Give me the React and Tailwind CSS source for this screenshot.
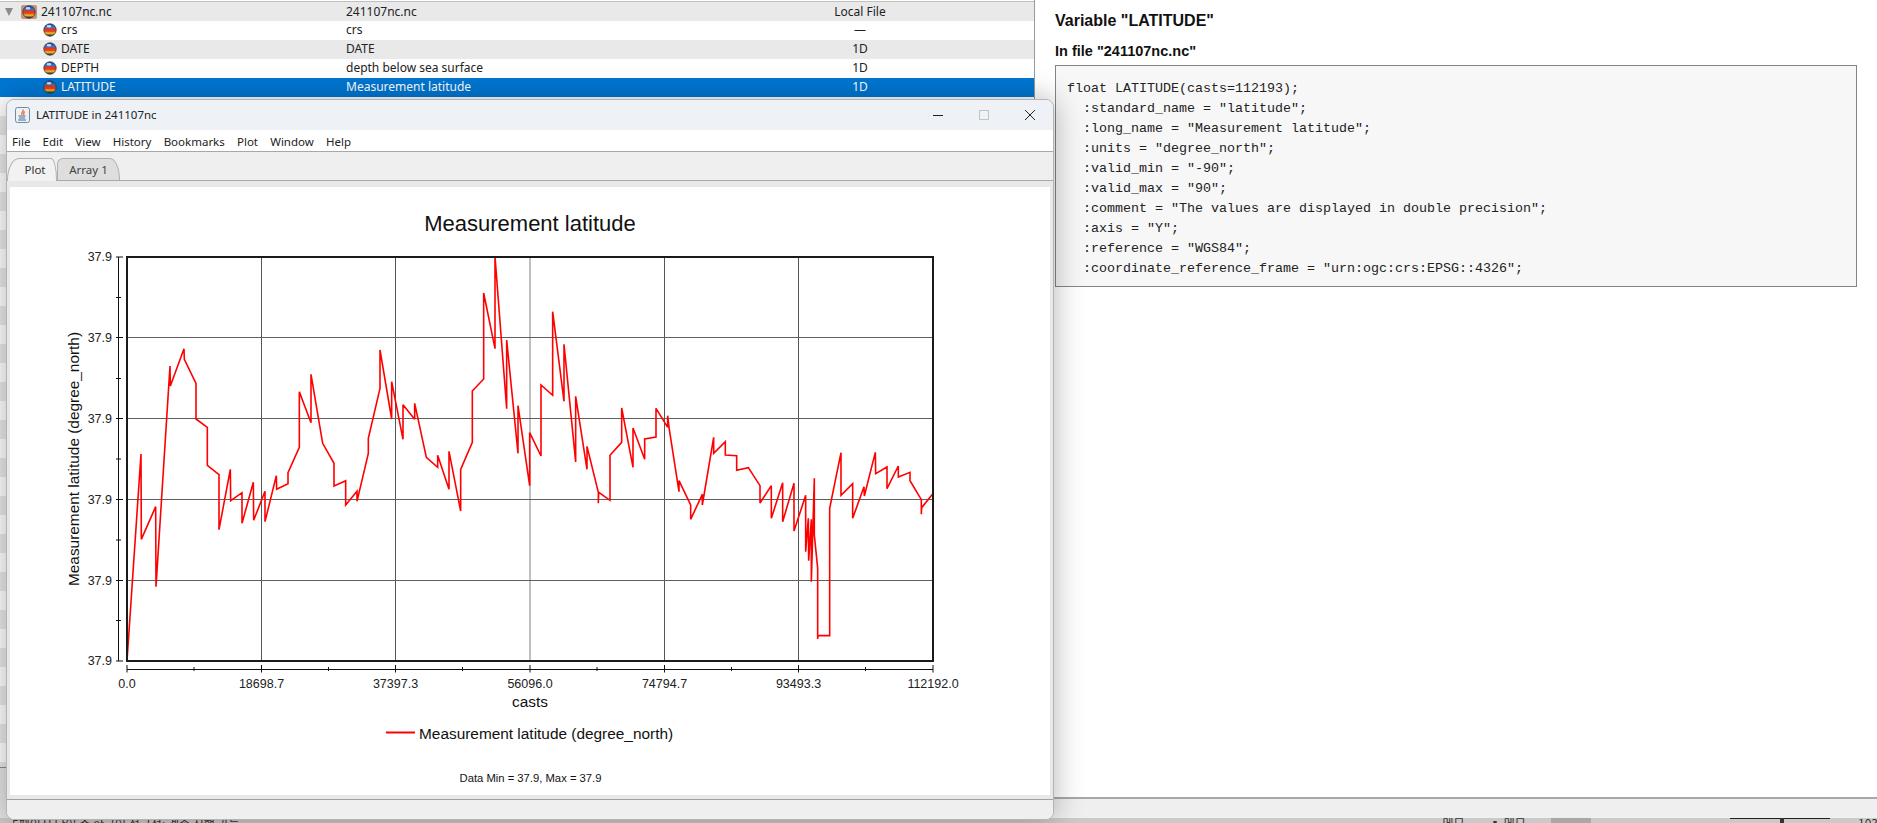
import React from 'react';

// points read from the plot, offset to page coordinates below
const leftPts = [[201,1263],[243,642],[244,898],[287,800],[288,1040],[330,378],[331,438],[372,326],[373,358],[408,430],[408,537],[442,562],[442,676],[477,704],[477,869],[511,688],[512,782],[546,758],[546,850],[580,727],[581,841],[615,754],[615,845],[649,707],[650,748],[684,731],[684,698],[718,622],[718,455],[753,548],[753,403],[788,610],[822,670],[822,738],[857,722],[857,795],[891,754],[891,784],[925,640],[925,595],[960,445],[960,330],[995,537],[995,425],[1029,598],[1029,494],[1064,538],[1064,490],[1099,652],[1133,682],[1133,646],[1167,748],[1167,634],[1202,813],[1202,688],[1237,607],[1237,453],[1271,417],[1271,159],[1305,326],[1305,50]];
const rightPts = [[80,506],[80,300],[114,640],[114,497],[149,737],[149,578],[183,648],[183,435],[218,466],[218,215],[252,484],[252,313],[287,666],[287,469],[321,688],[321,619],[355,757],[355,790],[356,757],[390,781],[390,646],[425,607],[425,504],[459,682],[459,564],[494,658],[494,597],[528,591],[528,505],[563,562],[563,527],[567,562],[597,755],[597,722],[632,795],[632,838],[667,763],[667,795],[701,592],[701,640],[736,605],[736,645],[770,647],[770,691],[805,683],[840,737],[840,789],[874,737],[874,835],[908,728],[908,845],[942,730],[942,873],[977,766],[977,935],[985,835],[986,962],[994,838],[994,1025],[1003,715],[1003,885],[1013,985],[1013,1197],[1014,1187],[1049,1187],[1049,805],[1083,638],[1083,766],[1118,731],[1118,835],[1152,740],[1153,768],[1186,637],[1187,701],[1221,681],[1221,746],[1255,678],[1255,711],[1290,697],[1290,722],[1324,779],[1324,823],[1325,803],[1358,762]];

const linePoints = [
  ...leftPts.map(([x, y]) => `${(60 + x / 3).toFixed(2)},${(240 + y / 3).toFixed(2)}`),
  ...rightPts.map(([x, y]) => `${(480 + x / 3).toFixed(2)},${(240 + y / 3).toFixed(2)}`),
].join(' ');

const xTicks = [
  { x: 127, label: '0.0' },
  { x: 261.5, label: '18698.7' },
  { x: 395.5, label: '37397.3' },
  { x: 530, label: '56096.0' },
  { x: 664.5, label: '74794.7' },
  { x: 798.5, label: '93493.3' },
  { x: 933, label: '112192.0' },
];
const xMinor = [194, 328.5, 462.5, 597, 731.5, 865.5];
const yTicks = [257, 337.5, 418.5, 499.5, 580.5, 661];
const yMinor = [297.5, 378.5, 459, 540, 620.5];

const codeLines = [
  'float LATITUDE(casts=112193);',
  '  :standard_name = "latitude";',
  '  :long_name = "Measurement latitude";',
  '  :units = "degree_north";',
  '  :valid_min = "-90";',
  '  :valid_max = "90";',
  '  :comment = "The values are displayed in double precision";',
  '  :axis = "Y";',
  '  :reference = "WGS84";',
  '  :coordinate_reference_frame = "urn:ogc:crs:EPSG::4326";',
];

const rows = [
  { name: 'crs', desc: 'crs', kind: '—' },
  { name: 'DATE', desc: 'DATE', kind: '1D' },
  { name: 'DEPTH', desc: 'depth below sea surface', kind: '1D' },
  { name: 'LATITUDE', desc: 'Measurement latitude', kind: '1D', selected: true },
];

const menus = ['File', 'Edit', 'View', 'History', 'Bookmarks', 'Plot', 'Window', 'Help'];

const Globe = () => (
  <svg width="14" height="14" viewBox="0 0 14 14" className="shrink-0">
    <defs>
      <linearGradient id="globeBands" x1="0" y1="0" x2="0" y2="1">
        <stop offset="0" stopColor="#1c3f8f" />
        <stop offset="0.3" stopColor="#2f78d8" />
        <stop offset="0.42" stopColor="#e8301c" />
        <stop offset="0.62" stopColor="#e84a14" />
        <stop offset="0.76" stopColor="#f4c42c" />
        <stop offset="0.92" stopColor="#5a4a30" />
        <stop offset="1" stopColor="#222222" />
      </linearGradient>
    </defs>
    <circle cx="7" cy="7" r="6.2" fill="url(#globeBands)" stroke="#3a3a3a" strokeWidth="0.8" />
    <ellipse cx="6" cy="3.2" rx="2.4" ry="1.3" fill="#e6f0ff" opacity="0.85" />
  </svg>
);

const JavaIcon = () => (
  <svg width="15" height="16" viewBox="0 0 15 16" className="shrink-0">
    <rect x="0.5" y="0.5" width="14" height="15" rx="2" fill="#eef1f4" stroke="#6f8ba3" />
    <path d="M8 2.5C9.5 4.5 5.5 5.5 7 8M9.5 4.5C9 6 8 6.5 9 8" fill="none" stroke="#e8641c" strokeWidth="1.2" />
    <path d="M3.5 9h7M4 11h6M3 13h8" stroke="#3f6f9f" strokeWidth="1" />
  </svg>
);

const Row = ({ row, index }) => {
  const bg = row.selected ? 'bg-[#0177d3] text-white' : index % 2 === 0 ? 'bg-white text-[#222]' : 'bg-[#e9e9e9] text-[#222]';
  return (
    <div className={`flex h-[19px] items-center pb-[2px] ${bg}`}>
      <div className="flex w-[346px] items-center gap-[4px] pl-[43px]">
        <Globe />
        <span>{row.name}</span>
      </div>
      <div className="w-[458px]">{row.desc}</div>
      <div className="w-[112px] text-center">{row.kind}</div>
    </div>
  );
};

const Chart = () => (
  <svg width="1040" height="608" viewBox="10 187 1040 608" className="block font-['Liberation_Sans']">
    <text x="530" y="231" textAnchor="middle" fontSize="22" fill="#111">Measurement latitude</text>

    {/* grid */}
    {xTicks.slice(1, -1).map((t) => (
      <line key={t.x} x1={t.x} y1="257" x2={t.x} y2="661" stroke={t.x === 530 ? '#aaaaaa' : '#555555'} strokeWidth={t.x === 530 ? 1.5 : 1} />
    ))}
    {yTicks.slice(1, -1).map((y) => (
      <line key={y} x1="127" y1={y} x2="933" y2={y} stroke="#5f5f5f" strokeWidth="1" />
    ))}

    {/* data */}
    <polyline points={linePoints} fill="none" stroke="#ff0000" strokeWidth="1.6" strokeLinejoin="miter" strokeMiterlimit="3" />
    <rect x="127" y="257" width="806" height="404" fill="none" stroke="#1a1a1a" strokeWidth="2" />

    {/* y axis */}
    <line x1="118.5" y1="257" x2="118.5" y2="661" stroke="#111" strokeWidth="1" />
    {yTicks.map((y) => (
      <g key={y}>
        <line x1="116" y1={y} x2="123" y2={y} stroke="#111" />
        <text x="112" y={y + 4} textAnchor="end" fontSize="12.5" fill="#222">37.9</text>
      </g>
    ))}
    {yMinor.map((y) => (
      <line key={y} x1="116" y1={y} x2="121" y2={y} stroke="#111" />
    ))}
    <text transform="translate(79 459) rotate(-90)" textAnchor="middle" fontSize="15.4" fill="#111">Measurement latitude (degree_north)</text>

    {/* x axis */}
    <line x1="127" y1="669.5" x2="933" y2="669.5" stroke="#111" strokeWidth="1" />
    {xTicks.map((t) => (
      <g key={t.x}>
        <line x1={t.x} y1="665" x2={t.x} y2="672.5" stroke="#111" />
        <text x={t.x} y="688" textAnchor="middle" fontSize="12.5" fill="#222">{t.label}</text>
      </g>
    ))}
    {xMinor.map((x) => (
      <line key={x} x1={x} y1="667" x2={x} y2="671" stroke="#111" />
    ))}
    <text x="530" y="707" textAnchor="middle" fontSize="15.4" fill="#111">casts</text>

    {/* legend */}
    <line x1="386" y1="732.5" x2="415" y2="732.5" stroke="#ff0000" strokeWidth="2" />
    <text x="419" y="739" fontSize="15.4" fill="#111">Measurement latitude (degree_north)</text>
    <text x="530.5" y="782" textAnchor="middle" fontSize="11.25" fill="#111">Data Min = 37.9, Max = 37.9</text>
  </svg>
);

const PlotWindow = () => (
  <div className="absolute left-[6px] top-[99px] z-10 flex h-[721px] w-[1048px] flex-col overflow-hidden rounded-lg border border-[#b4b4b4] bg-[#efefef] font-['Noto_Sans'] text-[11.5px] text-[#222] shadow-[0_0_30px_rgba(0,0,0,0.3)]">
    {/* title bar */}
    <div className="flex h-[30px] shrink-0 items-center bg-[#eef2f7] pl-[8px]">
      <JavaIcon />
      <span className="ml-[6px] flex-1">LATITUDE in 241107nc</span>
      <div className="flex items-center">
        <svg width="138" height="14" viewBox="0 0 138 14" className="mr-[11px]">
          <line x1="29" y1="7.5" x2="39" y2="7.5" stroke="#222" />
          <rect x="75.5" y="2.5" width="9" height="9" fill="none" stroke="#c4c4c4" />
          <path d="M121 2l10 10M131 2l-10 10" stroke="#222" fill="none" />
        </svg>
      </div>
    </div>

    {/* menu bar */}
    <div className="flex h-[22px] shrink-0 items-center gap-[12.2px] border-b border-[#a8a8a8] bg-white pl-[5px] pt-[3px]">
      {menus.map((m) => (
        <span key={m}>{m}</span>
      ))}
    </div>

    {/* tabs */}
    <div className="flex h-[29px] shrink-0 items-end border-b border-[#a8a8a8] bg-[#efefef]">
      <div className="-mb-px flex h-[23px] w-[50px] items-center justify-center rounded-tl-[12px_22px] rounded-tr-[6px_22px] border border-b-0 border-[#b0b0b0] bg-[#f2f2f2] pl-[6px] text-[#333]">Plot</div>
      <div className="flex h-[22px] w-[63px] items-center justify-center rounded-tl-[6px] rounded-tr-[10px_22px] border border-b-0 border-[#b0b0b0] bg-[#dedede] text-[#444]">Array 1</div>
    </div>

    {/* plot panel */}
    <div className="flex-1 overflow-hidden bg-[#e8e8e8] px-[3px] pb-[4px] pt-[6px]">
      <div className="h-full bg-white">
        <Chart />
      </div>
    </div>

    <div className="h-[20px] shrink-0 border-t border-[#a0a0a0] bg-[#efefef]" />
  </div>
);

const App = () => {
  const blank = Array.from({ length: 36 }, (_, i) => i);

  return (
    <div className="relative h-[823px] w-[1877px] overflow-hidden bg-white font-['Noto_Sans'] text-[12px]">
      <div className="flex h-[818px]">
        {/* left pane */}
        <div className="flex w-[1035px] shrink-0 flex-col border-r border-[#9a9a9a]">
          <div className="h-[767px] overflow-hidden">
            <div className="h-[2px] border-b border-[#c0c0c0]" />
            <div className="flex h-[19px] items-center bg-[#e9e9e9] text-[#222]">
              <div className="flex w-[346px] items-center pl-[5px]">
                <svg width="8" height="8" viewBox="0 0 8 8" className="shrink-0">
                  <path d="M0 0h8L4 8z" fill="#8a8a8a" />
                </svg>
                <span className="ml-[8px] flex h-[14px] w-[16px] items-center justify-center rounded-[2px] bg-[#c49478]">
                  <Globe />
                </span>
                <span className="ml-[4px]">241107nc.nc</span>
              </div>
              <div className="w-[458px]">241107nc.nc</div>
              <div className="w-[112px] text-center">Local File</div>
            </div>
            {rows.map((row, i) => (
              <Row key={row.name} row={row} index={i} />
            ))}
            {blank.map((i) => (
              <div key={i} className={`h-[19px] ${i % 2 === 0 ? 'bg-white' : 'bg-[#e9e9e9]'}`} />
            ))}
          </div>
          <div className="flex-1 border-t border-[#8a8a8a] bg-[#e4e4e4]" />
        </div>

        {/* right pane */}
        <div className="flex min-w-0 flex-1 flex-col">
          <div className="flex-1 pl-[20px] pr-[20px] pt-[11px] font-['Liberation_Sans'] text-[#111]">
            <h3 className="text-[16px] font-bold leading-[20px]">Variable "LATITUDE"</h3>
            <h4 className="mt-[10px] text-[14.5px] font-bold leading-[20px]">In file "241107nc.nc"</h4>
            <pre className="mt-[4px] h-[222px] border border-[#858585] bg-[#f7f7f7] pl-[11px] pt-[13px] font-['Liberation_Mono'] text-[13.33px] leading-[20px] text-[#222]">
              {codeLines.join('\n')}
            </pre>
          </div>
          <div className="h-[21px] shrink-0 border-t-2 border-[#a8a8a8] bg-[#efefef]" />
        </div>
      </div>

      {/* host app status bar, only its top edge shows */}
      <div className="flex h-[5px] items-start overflow-hidden bg-[#cacaca] font-['Noto_Sans_CJK_KR'] text-[12px] leading-[14px] text-[#333]">
        <span className="ml-[12px] mt-[-1px] w-[1417px] shrink-0">5페이지 단어 수 한국어 접근성: 계속 진행 가능</span>
        <span className="mt-[-2px] w-[60px] shrink-0">— 메모</span>
        <span className="mt-[-2px] w-[62px] shrink-0">▪ 메모</span>
        <div className="h-[5px] w-[40px] shrink-0 bg-[#a8a8a8]" />
        <div className="ml-[139px] h-px w-[50px] shrink-0 bg-[#222]" />
        <div className="h-[5px] w-[4px] shrink-0 bg-[#333]" />
        <div className="h-px w-[46px] shrink-0 bg-[#222]" />
        <span className="ml-[28px] mt-[-2px] shrink-0">103%</span>
      </div>

      <PlotWindow />
    </div>
  );
};

export default App;
